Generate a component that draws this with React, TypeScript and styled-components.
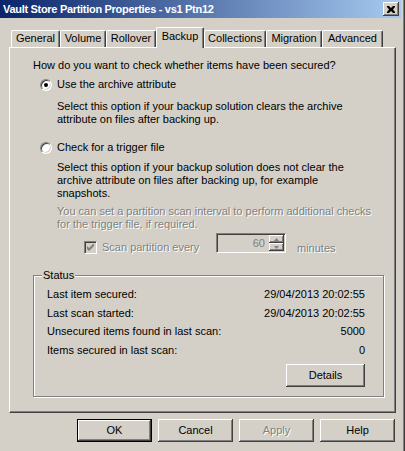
import React from "react";
import styled, { createGlobalStyle, css } from "styled-components";

const FACE = "#d4d0c8";
const SHADOW = "#808080";
const DARK = "#404040";

const GlobalStyle = createGlobalStyle`
  html, body {
    margin: 0;
    padding: 0;
    background: ${FACE};
  }
  body {
    font-family: "Liberation Sans", Arial, sans-serif;
    font-size: 11px;
    line-height: 13px;
    color: #000;
  }
`;

const raised = css`
  box-shadow: inset -1px -1px 0 ${DARK}, inset 1px 1px 0 #fff,
    inset -2px -2px 0 ${SHADOW}, inset 2px 2px 0 ${FACE};
`;

const sunken = css`
  border: 1px solid;
  border-color: ${SHADOW} #fff #fff ${SHADOW};
  box-shadow: inset 1px 1px 0 ${DARK}, inset -1px -1px 0 ${FACE};
`;

const Window = styled.div`
  width: 405px;
  height: 451px;
  display: flex;
  overflow: hidden;
  background: ${FACE};
`;

const WindowMain = styled.div`
  flex: 1;
  min-width: 0;
  display: flex;
  flex-direction: column;
`;

const WindowEdge = styled.div`
  flex: none;
  width: 2px;
  border-left: 2px solid ${FACE};
  box-shadow: inset -1px 0 0 ${DARK}, inset -2px 0 0 ${SHADOW};
`;

const TitleBar = styled.div`
  height: 18px;
  display: flex;
  align-items: center;
  justify-content: space-between;
  padding: 0 2px 0 3px;
  background: linear-gradient(to right, #0a246a, #a6caf0);
`;

const TitleText = styled.span`
  color: #fff;
  font-weight: bold;
  font-size: 11px;
  letter-spacing: -0.3px;
  white-space: nowrap;
`;

const CloseButton = styled.div`
  box-sizing: border-box;
  width: 16px;
  height: 14px;
  background: ${FACE};
  ${raised};
  display: flex;
  align-items: center;
  justify-content: center;
`;

const TabStrip = styled.div`
  margin-top: 9px;
  height: 20px;
  display: flex;
  align-items: flex-end;
  padding-left: 11px;
`;

const Tab = styled.div<{ $active?: boolean; $w: number }>`
  box-sizing: border-box;
  width: ${(p) => p.$w}px;
  height: ${(p) => (p.$active ? 21 : 17)}px;
  margin-bottom: ${(p) => (p.$active ? -1 : 0)}px;
  padding-top: ${(p) => (p.$active ? 2 : 1)}px;
  border-top: 1px solid #fff;
  border-left: 1px solid #fff;
  border-right: 1px solid ${DARK};
  border-radius: 2px 2px 0 0;
  box-shadow: inset -1px 0 0 ${SHADOW};
  background: ${FACE};
  text-align: center;
  white-space: nowrap;
  position: relative;
  z-index: ${(p) => (p.$active ? 2 : 1)};
`;

const TabPanel = styled.div`
  margin: 0 5px 0 9px;
  border-top: 1px solid #fff;
  border-left: 1px solid #fff;
  border-right: 1px solid ${DARK};
  border-bottom: 1px solid ${DARK};
  box-shadow: inset -1px -1px 0 ${SHADOW};
  padding: 11px 11px 15px 23px;
`;

const Question = styled.div``;

const OptionRow = styled.div<{ $top: number }>`
  margin-top: ${(p) => p.$top}px;
  display: flex;
  align-items: center;
  gap: 5px;
  padding-left: 7px;
`;

const RadioCircle = styled.span<{ $checked?: boolean }>`
  box-sizing: border-box;
  width: 12px;
  height: 12px;
  border-radius: 50%;
  background: #fff;
  ${sunken};
  display: flex;
  align-items: center;
  justify-content: center;

  &::after {
    content: "";
    width: 4px;
    height: 4px;
    border-radius: 50%;
    background: #000;
    display: ${(p) => (p.$checked ? "block" : "none")};
  }
`;

const Description = styled.div<{ $top: number; $muted?: boolean }>`
  margin-top: ${(p) => p.$top}px;
  padding-left: 24px;
  white-space: nowrap;
  ${(p) =>
    p.$muted &&
    css`
      color: ${SHADOW};
      text-shadow: 1px 1px 0 #fff;
    `}
`;

const ScanRow = styled.div`
  margin-top: 2px;
  display: flex;
  align-items: flex-end;
  padding-left: 51px;
`;

const CheckGroup = styled.div`
  width: 132px;
  display: flex;
  align-items: center;
  gap: 5px;
  margin-bottom: -1px;
`;

const CheckBox = styled.span`
  box-sizing: border-box;
  width: 13px;
  height: 13px;
  background: ${FACE};
  ${sunken};
  display: flex;
  align-items: center;
  justify-content: center;
`;

const MutedLabel = styled.span`
  color: ${SHADOW};
  text-shadow: 1px 1px 0 #fff;
  white-space: nowrap;
`;

const SpinBox = styled.div`
  box-sizing: border-box;
  width: 70px;
  height: 20px;
  background: ${FACE};
  ${sunken};
  display: flex;
  padding: 1px;
`;

const SpinValue = styled.span`
  flex: 1;
  text-align: right;
  padding-right: 4px;
  line-height: 16px;
  color: ${SHADOW};
`;

const SpinButtons = styled.div`
  display: flex;
  flex-direction: column;
`;

const SpinArrow = styled.div`
  box-sizing: border-box;
  width: 15px;
  height: 8px;
  background: ${FACE};
  ${raised};
  display: flex;
  align-items: center;
  justify-content: center;
`;

const Minutes = styled(MutedLabel)`
  margin-left: 11px;
  margin-bottom: -2px;
`;

const GroupBox = styled.div`
  position: relative;
  margin-top: 22px;
  border: 1px solid ${SHADOW};
  box-shadow: inset 1px 1px 0 #fff, 1px 1px 0 #fff;
  padding: 12px 18px 9px 13px;
`;

const GroupTitle = styled.span`
  position: absolute;
  top: -7px;
  left: 8px;
  padding: 0 1px;
  background: ${FACE};
`;

const StatusRow = styled.div`
  display: flex;
  justify-content: space-between;
  & + & {
    margin-top: 5.5px;
  }
`;

const StatusActions = styled.div`
  margin-top: 7.5px;
  display: flex;
  justify-content: flex-end;
`;

const Button = styled.button<{ $default?: boolean; $w?: number }>`
  box-sizing: border-box;
  width: ${(p) => p.$w ?? 75}px;
  height: 23px;
  padding: 0;
  font: inherit;
  color: #000;
  background: ${FACE};
  border: ${(p) => (p.$default ? "1px solid #000" : "none")};
  ${raised};

  &:disabled {
    color: ${SHADOW};
    text-shadow: 1px 1px 0 #fff;
  }
`;

const ButtonBar = styled.div`
  margin-top: 6px;
  display: flex;
  justify-content: flex-end;
  gap: 6px;
  padding-right: 6px;
`;

const tabs = [
  { label: "General", w: 49 },
  { label: "Volume", w: 46 },
  { label: "Rollover", w: 50 },
  { label: "Backup", w: 48, active: true },
  { label: "Collections", w: 62 },
  { label: "Migration", w: 56 },
  { label: "Advanced", w: 61 },
];

const status = [
  ["Last item secured:", "29/04/2013 20:02:55"],
  ["Last scan started:", "29/04/2013 20:02:55"],
  ["Unsecured items found in last scan:", "5000"],
  ["Items secured in last scan:", "0"],
];

const App = () => {
  return (
    <>
      <GlobalStyle />
      <Window>
        <WindowMain>
          <TitleBar>
            <TitleText>Vault Store Partition Properties - vs1 Ptn12</TitleText>
            <CloseButton>
              <svg width="8" height="7" viewBox="0 0 8 7">
                <path d="M0 0h2l2 2 2-2h2v1L6 3.5 8 6v1H6L4 5 2 7H0V6l2-2.5L0 1z" fill="#000" />
              </svg>
            </CloseButton>
          </TitleBar>

          <TabStrip>
            {tabs.map((t) => (
              <Tab key={t.label} $w={t.w} $active={t.active}>
                {t.label}
              </Tab>
            ))}
          </TabStrip>

          <TabPanel>
            <Question>How do you want to check whether items have been secured?</Question>

            <OptionRow $top={6}>
              <RadioCircle $checked />
              <span>Use the archive attribute</span>
            </OptionRow>
            <Description $top={9}>
              Select this option if your backup solution clears the archive
              <br />
              attribute on files after backing up.
            </Description>

            <OptionRow $top={15}>
              <RadioCircle />
              <span>Check for a trigger file</span>
            </OptionRow>
            <Description $top={7}>
              Select this option if your backup solution does not clear the
              <br />
              archive attribute on files after backing up, for example
              <br />
              snapshots.
            </Description>
            <Description $top={5} $muted>
              You can set a partition scan interval to perform additional checks
              <br />
              for the trigger file, if required.
            </Description>

            <ScanRow>
              <CheckGroup>
                <CheckBox>
                  <svg width="7" height="7" viewBox="0 0 7 7">
                    <path d="M0 2v3l2 2 5-5V-1L2 4z" fill={SHADOW} />
                  </svg>
                </CheckBox>
                <MutedLabel>Scan partition every</MutedLabel>
              </CheckGroup>
              <SpinBox>
                <SpinValue>60</SpinValue>
                <SpinButtons>
                  <SpinArrow>
                    <svg width="5" height="3" viewBox="0 0 5 3">
                      <path d="M2.5 0L5 3H0z" fill={SHADOW} />
                    </svg>
                  </SpinArrow>
                  <SpinArrow>
                    <svg width="5" height="3" viewBox="0 0 5 3">
                      <path d="M0 0h5L2.5 3z" fill={SHADOW} />
                    </svg>
                  </SpinArrow>
                </SpinButtons>
              </SpinBox>
              <Minutes>minutes</Minutes>
            </ScanRow>

            <GroupBox>
              <GroupTitle>Status</GroupTitle>
              {status.map(([label, value]) => (
                <StatusRow key={label}>
                  <span>{label}</span>
                  <span>{value}</span>
                </StatusRow>
              ))}
              <StatusActions>
                <Button $w={79}>Details</Button>
              </StatusActions>
            </GroupBox>
          </TabPanel>

          <ButtonBar>
            <Button $default>OK</Button>
            <Button>Cancel</Button>
            <Button disabled>Apply</Button>
            <Button>Help</Button>
          </ButtonBar>
        </WindowMain>
        <WindowEdge />
      </Window>
    </>
  );
};

export default App;
